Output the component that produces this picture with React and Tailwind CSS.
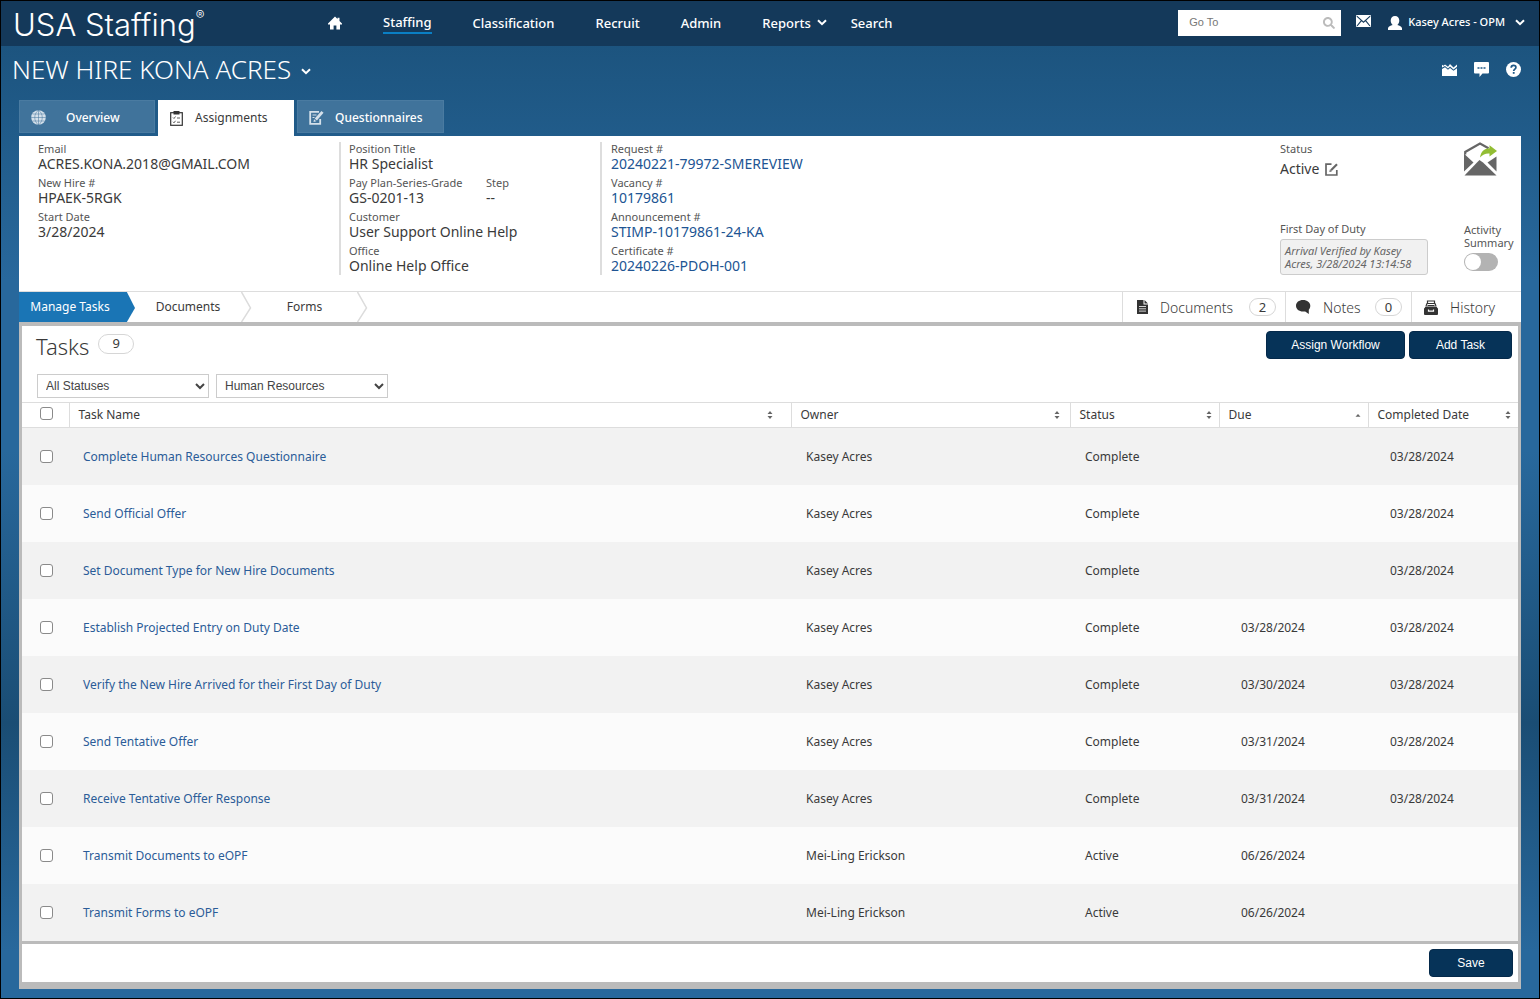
import { useState } from 'react'
import { FaSearch } from 'react-icons/fa'

const tasks = [
  { name: 'Complete Human Resources Questionnaire', owner: 'Kasey Acres', status: 'Complete', due: '', completed: '03/28/2024' },
  { name: 'Send Official Offer', owner: 'Kasey Acres', status: 'Complete', due: '', completed: '03/28/2024' },
  { name: 'Set Document Type for New Hire Documents', owner: 'Kasey Acres', status: 'Complete', due: '', completed: '03/28/2024' },
  { name: 'Establish Projected Entry on Duty Date', owner: 'Kasey Acres', status: 'Complete', due: '03/28/2024', completed: '03/28/2024' },
  { name: 'Verify the New Hire Arrived for their First Day of Duty', owner: 'Kasey Acres', status: 'Complete', due: '03/30/2024', completed: '03/28/2024' },
  { name: 'Send Tentative Offer', owner: 'Kasey Acres', status: 'Complete', due: '03/31/2024', completed: '03/28/2024' },
  { name: 'Receive Tentative Offer Response', owner: 'Kasey Acres', status: 'Complete', due: '03/31/2024', completed: '03/28/2024' },
  { name: 'Transmit Documents to eOPF', owner: 'Mei-Ling Erickson', status: 'Active', due: '06/26/2024', completed: '' },
  { name: 'Transmit Forms to eOPF', owner: 'Mei-Ling Erickson', status: 'Active', due: '06/26/2024', completed: '' },
]

const columns = [
  { label: 'Task Name', width: '', pad: 'pr-[18px]' },
  { label: 'Owner', width: 'w-[279px]', pad: 'pr-[10px]' },
  { label: 'Status', width: 'w-[149px]', pad: 'pr-[7px]' },
  { label: 'Due', width: 'w-[149px]', pad: 'pr-[7px]', sorted: true },
  { label: 'Completed Date', width: 'w-[150px]', pad: 'pr-[7px]' },
]

function Chevron() {
  return (
    <svg className="w-[10px] h-[7px]" viewBox="0 0 10 7" fill="none" stroke="currentColor" strokeWidth="2">
      <path d="M1 1.2 5 5.2 9 1.2" />
    </svg>
  )
}

function HomeIcon() {
  return (
    <svg className="w-[14px] h-[14px]" viewBox="0 0 14 14" fill="currentColor">
      <path d="M7 .6 0 7.6v.9h2v4.9h3.600V9.500h2.800v3.900H12V8.500h2v-.9l-2.500-2.500V1.800h-2v1.300z" />
    </svg>
  )
}

function MailIcon() {
  return (
    <svg className="w-[15px] h-[12px]" viewBox="0 0 15 12">
      <rect width="15" height="12" rx="1" fill="#fff" />
      <path d="M.8 1.2 7.5 7.2 14.2 1.2M1 11 5.2 5.800M14 11 9.800 5.800" fill="none" stroke="#14395a" strokeWidth="1.1" />
    </svg>
  )
}

function UserIcon() {
  return (
    <svg className="w-[14px] h-[14px]" viewBox="0 0 14 14" fill="currentColor">
      <path d="M7 0c2.6 0 4.3 1.9 4.3 4.500 0 1.900-.8 3.600-2 4.500 2.500.6 4.300 1.500 4.700 3.200V14H0v-1.800C.4 10.500 2.200 9.600 4.700 9c-1.200-.9-2-2.600-2-4.500C2.700 1.900 4.400 0 7 0z" />
    </svg>
  )
}

function ChartIcon() {
  return (
    <svg className="w-[15px] h-[13px]" viewBox="0 0 15 13">
      <path d="M0 6 3 4.200l3 2.600 2-1.800 3.500 2.800L15 5.200V13H0z" fill="#fff" />
      <path d="M0 1.800 1.500 2.800 3 1.400l3 2.400L8 1l3.500 3.600L15 1.600V3.800L11.500 6.400 8 3.600 6 5.400 3 2.900 0 4.600z" fill="#fff" />
    </svg>
  )
}

function ChatIcon() {
  return (
    <svg className="w-[15px] h-[15px]" viewBox="0 0 15 15">
      <path d="M1 0h13a1 1 0 0 1 1 1v9.500a1 1 0 0 1-1 1H8.500L5.500 15v-3.500H1a1 1 0 0 1-1-1V1a1 1 0 0 1 1-1z" fill="#fff" />
      <path d="M3.500 5.200h2v1.600h-2zM6.500 5.200h2v1.600h-2zM9.500 5.200h2v1.600h-2z" fill="#1e5886" />
    </svg>
  )
}

function HelpIcon() {
  return (
    <svg className="w-[15px] h-[15px]" viewBox="0 0 15 15">
      <circle cx="7.5" cy="7.5" r="7.5" fill="#fff" />
      <path d="M5.200 5.800c0-1.500 1-2.400 2.400-2.400s2.300.8 2.300 2c0 1.700-2.200 1.700-2.200 3.600" fill="none" stroke="#1e5886" strokeWidth="1.7" />
      <rect x="6.8" y="10" width="1.8" height="1.8" fill="#1e5886" />
    </svg>
  )
}

function GlobeIcon() {
  return (
    <svg className="w-[15px] h-[15px]" viewBox="0 0 15 15">
      <circle cx="7.5" cy="7.5" r="7.3" fill="#d4e0ea" />
      <path d="M7.500 0v15M0 7.500h15M1.500 4h12M1.500 11h12M7.500 0c-5 4-5 11 0 15M7.500 0c5 4 5 11 0 15" fill="none" stroke="#40739b" strokeWidth=".5" />
    </svg>
  )
}

function ClipboardIcon() {
  return (
    <svg className="w-[13px] h-[15px]" viewBox="0 0 13 15" fill="none" stroke="#333">
      <rect x=".7" y="1.7" width="11.6" height="12.6" strokeWidth="1.2" />
      <path d="M3.500 0h6v3.500h-6z" fill="#333" stroke="none" />
      <path d="M3 6.500l1 1 1.500-2M7 7h3M3 10.800l1 1 1.500-2M7 11.200h3" strokeWidth=".8" />
    </svg>
  )
}

function FormEditIcon() {
  return (
    <svg className="w-[15px] h-[15px]" viewBox="0 0 15 15" fill="none" stroke="#d4e0ea">
      <path d="M10 1.800H1.200v12h10V9" strokeWidth="1.8" />
      <path d="M3.500 5h4M3.500 7.500h2" strokeWidth="1.2" />
      <path d="M13.500 1.800 6.800 9.500" strokeWidth="2.8" />
      <path d="M5 9.200 4.500 12l2.800-.8z" fill="#d4e0ea" stroke="none" />
    </svg>
  )
}

function EditIcon() {
  return (
    <svg className="w-[13px] h-[13px]" viewBox="0 0 13 13" fill="none" stroke="#666">
      <path d="M6.500 1.200H1v10.800h10.800V7" strokeWidth="1.7" />
      <path d="M12 1.200 6 7.200" strokeWidth="2.2" />
      <path d="M4.300 9l.6-2.600 2 2z" fill="#666" stroke="none" />
    </svg>
  )
}

function SendMailIcon() {
  return (
    <svg className="w-[33px] h-[34px]" viewBox="0 0 33 34">
      <path d="M1.200 12.500V10L16 1.500 24.500 6.200" fill="none" stroke="#666" strokeWidth="2.2" />
      <path d="M0 11.500 2.500 14 9.500 20.500 0 29.500z" fill="#666" />
      <path d="M32.500 14.500v15L23.500 20.500z" fill="#666" />
      <path d="M.5 33.500 13 20.500 15.500 18l3.500 2.500L32.500 33.500z" fill="#666" />
      <path d="M16 15.500C17 9.500 20 6.500 25.500 6.200V3.200L33 9l-7.500 5.500v-3c-4-.3-6.500 1-9.500 4z" fill="#92bd33" />
    </svg>
  )
}

function CommentIcon() {
  return (
    <svg className="w-[15px] h-[14px]" viewBox="0 0 15 14" fill="#333">
      <path d="M7 0c4.200 0 7.300 2.500 7.300 5.800 0 1.700-.7 3-1.500 3.900V14l-3.600-2.600c-.7.200-1.400.2-2.200.2C3 11.600 0 9.200 0 5.800S3 0 7 0z" />
    </svg>
  )
}

function ArchiveIcon() {
  return (
    <svg className="w-[14px] h-[15px]" viewBox="0 0 14 15" fill="none" stroke="#333">
      <path d="M3.500 3.500V1h7v2.500M2 6l1-2.500h8L12 6M3.500 5.500h7" strokeWidth="1.2" />
      <path d="M1.500 6.500h11L14 9H0z" fill="#333" stroke="none" />
      <path d="M0 8.500h14V14a1 1 0 0 1-1 1H1a1 1 0 0 1-1-1z" fill="#333" stroke="none" />
      <path d="M4.500 9.500v1.700h5V9.500" stroke="#fff" strokeWidth="1.2" />
    </svg>
  )
}

function FileIcon() {
  return (
    <svg className="w-[11px] h-[14px]" viewBox="0 0 11 14">
      <path d="M0 0h6.500v4.500H11V14H0zM7.500 0 11 3.500H7.500z" fill="#333" />
      <path d="M2 6.500h7M2 8.800h7M2 11.100h7" stroke="#fff" strokeWidth=".8" />
    </svg>
  )
}

function SortIcon({ sorted }) {
  return (
    <svg className="w-[6px] h-[8px] shrink-0" viewBox="0 0 6 8" fill="#666">
      {sorted ? <path d="M3 3 5.500 5.800h-5z" /> : <path d="M3 0 5.500 3h-5zM3 8 .5 5h5z" />}
    </svg>
  )
}

function StepDivider() {
  return (
    <svg className="w-[11px] h-[30px] shrink-0" viewBox="0 0 11 30" fill="none" stroke="#dcdcdc" strokeWidth="1.5">
      <path d="M.5 0 9.500 16 .5 30" />
    </svg>
  )
}

function Field({ label, value, link }) {
  return (
    <div>
      <div className="text-[11px] leading-[14px] text-[#555]">{label}</div>
      <div className="text-[14px] leading-4">
        {link ? <a href="#" className="text-[#205493]">{value}</a> : value}
      </div>
    </div>
  )
}

function Count({ children }) {
  return (
    <span className="flex h-[18px] w-[27px] items-center justify-center rounded-full border border-[#d6d6d6] text-[13px] leading-4 font-normal">
      {children}
    </span>
  )
}

function Checkbox({ label }) {
  return (
    <input
      type="checkbox"
      aria-label={label}
      className="ml-[18px] block h-[13px] w-[13px] appearance-none rounded-[3px] border border-[#8a8a8a] bg-white checked:bg-[#205493]"
    />
  )
}

function App() {
  const [summary, setSummary] = useState(false)
  const tab = 'flex h-[33px] items-center border border-[#4a7ba1] bg-[#40739b] pt-[2px] pl-[11px] text-[12px] font-medium text-white'
  const button = "h-7 rounded-[4px] border border-[#04294a] bg-[#063358] font-['Liberation_Sans',sans-serif] text-[12px] text-white"
  const select = "h-6 w-[172px] border border-[#ccc] bg-white pl-1 font-['Liberation_Sans',sans-serif] text-[12px] text-[#444]"

  return (
    <div className="min-h-screen border border-black bg-[linear-gradient(180deg,#1a5079_0px,#28689c_280px,#28689c_450px,#1a4d74_722px,#28689c_950px)] font-['Noto_Sans',sans-serif] text-[#3a3a3a]">
      {/* Top navigation */}
      <header className="flex h-[45px] items-center bg-[#14395a] pb-[2px] text-white">
        <a href="#" className="flex w-[327px] items-start pt-1 pl-3 font-['Inter',sans-serif] text-[31px] leading-9 font-light">
          USA Staffing<span className="text-[13px] leading-4">®</span>
        </a>
        <nav className="flex items-center gap-[41px] text-[13px] leading-5 font-medium">
          <a href="#" aria-label="Home"><HomeIcon /></a>
          <a href="#" className="border-b-2 border-[#0a7fc4]">Staffing</a>
          <a href="#">Classification</a>
          <a href="#">Recruit</a>
          <a href="#">Admin</a>
          <div className="flex items-center gap-6">
            <button className="flex items-center gap-[6px]">Reports <Chevron /></button>
            <a href="#">Search</a>
          </div>
        </nav>
        <div className="ml-auto flex items-center pr-[14px]">
          <label className="flex h-[26px] w-[163px] items-center bg-white pr-[6px] pl-[11px]">
            <input
              type="text"
              aria-label="Go To"
              placeholder="Go To"
              className="w-0 grow font-['Liberation_Sans',sans-serif] text-[11px] text-[#333] outline-none placeholder:text-[#777]"
            />
            <FaSearch className="h-3 w-3 text-[#bbb]" />
          </label>
          <button aria-label="Messages" className="ml-[15px] pb-1"><MailIcon /></button>
          <button className="ml-[17px] flex items-center text-[11px] font-medium">
            <UserIcon />
            <span className="mr-[10px] ml-[6px]">Kasey Acres - OPM</span>
            <Chevron />
          </button>
        </div>
      </header>

      {/* Page title */}
      <div className="flex h-[54px] items-center justify-between pr-[18px] pb-2 pl-[11px] text-white">
        <button className="flex items-center gap-[10px]">
          <h1 className="text-[26px] leading-8 font-light">NEW HIRE KONA ACRES</h1>
          <span className="pt-1"><Chevron /></span>
        </button>
        <div className="flex items-center gap-[17px]">
          <button aria-label="Reports"><ChartIcon /></button>
          <button aria-label="Feedback"><ChatIcon /></button>
          <button aria-label="Help"><HelpIcon /></button>
        </div>
      </div>

      <main className="px-[18px] pb-[9px]">
        <div className="flex h-9 items-start gap-[3px]">
          <button className={`${tab} w-[136px]`}><GlobeIcon /><span className="ml-5">Overview</span></button>
          <button className="flex h-9 w-[136px] items-center bg-white pl-3 text-[12px]">
            <ClipboardIcon /><span className="ml-3">Assignments</span>
          </button>
          <button className={`${tab} w-[147px]`}><FormEditIcon /><span className="ml-[11px]">Questionnaires</span></button>
        </div>

        {/* New hire details */}
        <section className="flex h-[156px] items-start border-b border-[#ddd] bg-white pt-[6px] pl-[19px]">
          <div className="flex h-[133px] w-[303px] flex-col gap-1 border-r-2 border-[#ddd]">
            <Field label="Email" value="ACRES.KONA.2018@GMAIL.COM" />
            <Field label="New Hire #" value="HPAEK-5RGK" />
            <Field label="Start Date" value="3/28/2024" />
          </div>
          <div className="flex h-[133px] w-[261px] flex-col gap-1 border-r-2 border-[#ddd] pl-2">
            <Field label="Position Title" value="HR Specialist" />
            <div className="flex">
              <div className="w-[137px]"><Field label="Pay Plan-Series-Grade" value="GS-0201-13" /></div>
              <Field label="Step" value="--" />
            </div>
            <Field label="Customer" value="User Support Online Help" />
            <Field label="Office" value="Online Help Office" />
          </div>
          <div className="flex flex-col gap-1 pl-[9px]">
            <Field label="Request #" value="20240221-79972-SMEREVIEW" link />
            <Field label="Vacancy #" value="10179861" link />
            <Field label="Announcement #" value="STIMP-10179861-24-KA" link />
            <Field label="Certificate #" value="20240226-PDOH-001" link />
          </div>
          <div className="ml-auto flex h-[133px] w-[184px] flex-col justify-between">
            <div>
              <div className="text-[11px] leading-[14px] text-[#555]">Status</div>
              <div className="mt-[3px] flex items-center gap-[6px] text-[14px] leading-5">
                Active <button aria-label="Edit status"><EditIcon /></button>
              </div>
            </div>
            <div>
              <div className="text-[11px] leading-[14px] text-[#555]">First Day of Duty</div>
              <div className="mt-[3px] w-[148px] rounded-[3px] border border-[#ccc] bg-[#f1f1f1] px-1 py-1 text-[11px] leading-[13px] text-[#666] italic">
                Arrival Verified by Kasey Acres, 3/28/2024 13:14:58
              </div>
            </div>
          </div>
          <div className="flex h-[133px] w-[57px] flex-col justify-between">
            <button aria-label="Send notification"><SendMailIcon /></button>
            <label className="mb-1 block text-[11px] leading-[13px] text-[#555]">
              Activity Summary
              <input
                type="checkbox"
                checked={summary}
                onChange={e => setSummary(e.target.checked)}
                className="mt-1 flex h-[18px] w-[34px] appearance-none items-center rounded-full bg-[#b3b3b3] p-px before:h-4 before:w-4 before:rounded-full before:bg-white checked:justify-end checked:bg-[#1a75b5]"
              />
            </label>
          </div>
        </section>

        {/* Steps and side links */}
        <div className="flex h-[30px] bg-white text-[12px]">
          <button className="w-[116px] bg-[#1a75b5] pr-[14px] text-white [clip-path:polygon(0_0,93%_0,100%_53%,93%_100%,0_100%)]">
            Manage Tasks
          </button>
          <button className="w-[106px]">Documents</button>
          <StepDivider />
          <button className="w-[105px]">Forms</button>
          <StepDivider />
          <div className="ml-auto flex text-[14px] font-light">
            <button className="flex w-[163px] items-center border-l border-[#ddd] pl-[14px]">
              <FileIcon /><span className="mr-auto ml-3">Documents</span>
              <span className="mr-[9px]"><Count>2</Count></span>
            </button>
            <button className="flex w-[126px] items-center border-l border-[#ddd] pl-[10px]">
              <CommentIcon /><span className="mr-auto ml-3">Notes</span>
              <span className="mr-[9px]"><Count>0</Count></span>
            </button>
            <button className="flex w-[110px] items-center border-l border-[#ddd] pl-3">
              <ArchiveIcon /><span className="ml-3">History</span>
            </button>
          </div>
        </div>

        {/* Tasks */}
        <section className="border-x-[3px] border-t-4 border-b-[7px] border-[#bbb] bg-white">
          <div className="flex items-start pt-[5px] pr-[6px] pl-[14px]">
            <h2 className="text-[22px] leading-[30px] font-light">Tasks</h2>
            <span className="mt-[3px] ml-[9px] flex h-5 w-9 items-center justify-center rounded-full border border-[#d6d6d6] text-[13px]">9</span>
            <div className="ml-auto flex gap-1">
              <button className={`${button} w-[139px]`}>Assign Workflow</button>
              <button className={`${button} w-[103px]`}>Add Task</button>
            </div>
          </div>
          <div className="flex gap-[7px] pt-[13px] pb-1 pl-[15px]">
            <select aria-label="Status" className={select}>
              <option>All Statuses</option>
              <option>Active</option>
              <option>Complete</option>
            </select>
            <select aria-label="Owner group" className={select}>
              <option>Human Resources</option>
            </select>
          </div>

          <table className="w-full table-fixed border-collapse text-left text-[12px]">
            <thead>
              <tr className="h-[25px] border-y border-[#ddd]">
                <th className="w-[47px] pb-[3px]"><Checkbox label="Select all tasks" /></th>
                {columns.map(col => (
                  <th key={col.label} className={`${col.width} ${col.pad} border-l border-[#ddd] pl-[9px] font-normal`}>
                    <div className="flex items-center justify-between">
                      {col.label}
                      <SortIcon sorted={col.sorted} />
                    </div>
                  </th>
                ))}
              </tr>
            </thead>
            <tbody>
              {tasks.map(task => (
                <tr key={task.name} className="h-[57px] odd:bg-[#f2f2f2] even:bg-[#fbfbfb]">
                  <td><Checkbox label={`Select ${task.name}`} /></td>
                  <td className="pt-[2px] pl-[14px]"><a href="#" className="text-[#2b5c98]">{task.name}</a></td>
                  <td className="pt-[2px] pl-[15px]">{task.owner}</td>
                  <td className="pt-[2px] pl-[15px]">{task.status}</td>
                  <td className="pt-[2px] pl-[22px]">{task.due}</td>
                  <td className="pt-[2px] pl-[22px]">{task.completed}</td>
                </tr>
              ))}
            </tbody>
          </table>

          <div className="flex justify-end border-t-[3px] border-[#bbb] px-[5px] py-[5px]">
            <button className={`${button} w-[84px]`}>Save</button>
          </div>
        </section>
      </main>
    </div>
  )
}

export default App
